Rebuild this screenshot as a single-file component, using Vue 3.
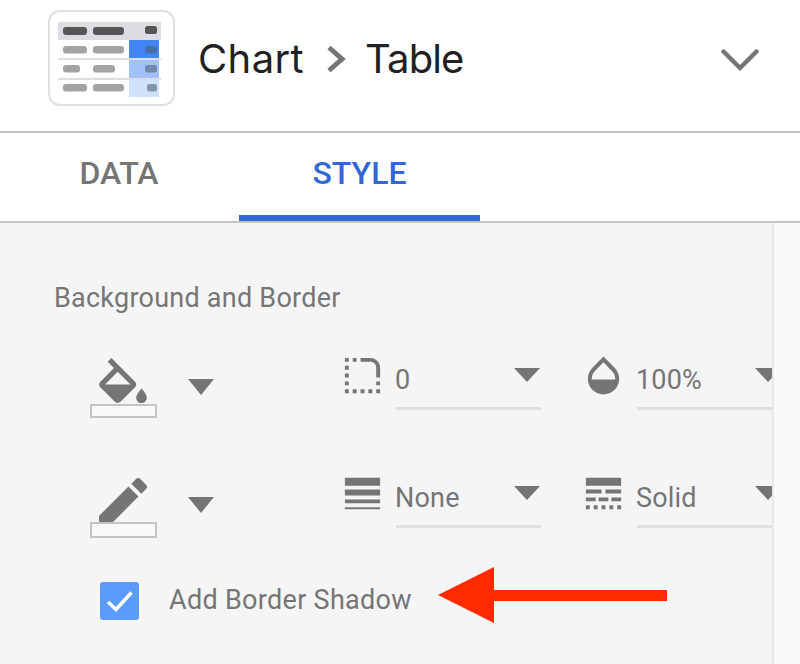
<script setup>
const fill = "M16.56 8.94L7.62 0 6.21 1.41l2.38 2.38-5.15 5.15c-.59.59-.59 1.54 0 2.12l5.5 5.5c.29.29.68.44 1.06.44s.77-.15 1.06-.44l5.5-5.5c.59-.58.59-1.53 0-2.12zM5.21 10L10 5.21 14.79 10H5.21zM19 11.5s-2 2.17-2 3.5c0 1.1.9 2 2 2s2-.9 2-2c0-1.33-2-3.5-2-3.5z";
const pencil = "M3 17.25V21h3.75L17.81 9.94l-3.75-3.75L3 17.25zM20.71 7.04c.39-.39.39-1.02 0-1.41l-2.34-2.34c-.39-.39-1.02-.39-1.41 0l-1.83 1.83 3.75 3.75 1.83-1.83z";
const rows = [
  {
    colorPath: fill, colorBox: "0 0 24 17", colorH: 45, swatchH: 14, pad: 6,
    fields: [
      { icon: "M19 19h2v2h-2v-2zm0-2h2v-2h-2v2zM3 13h2v-2H3v2zm0 4h2v-2H3v2zm0-8h2V7H3v2zm0-4h2V3H3v2zm4 0h2V3H7v2zm8 16h2v-2h-2v2zm-4 0h2v-2h-2v2zm-4 0h2v-2H7v2zm-4 0h2v-2H3v2zM21 8c0-2.76-2.24-5-5-5h-5v2h5c1.65 0 3 1.35 3 3v5h2V8z", value: "0" },
      { icon: "M17.66 8L12 2.35 6.34 8C4.78 9.56 4 11.64 4 13.64s.78 4.11 2.34 5.67 3.61 2.35 5.66 2.35 4.1-.79 5.66-2.35S20 15.64 20 13.64 19.22 9.56 17.66 8zM6 14c.01-2 .62-3.27 1.76-4.4L12 5.27l4.24 4.38C17.38 10.77 17.99 12 18 14H6z", value: "100%" }
    ]
  },
  {
    colorPath: pencil, colorBox: "0 3 24 16.5", colorH: 44, swatchH: 16, pad: 8,
    fields: [
      { icon: "M3 17h18v-2H3v2zm0 3h18v-1H3v1zm0-7h18v-3H3v3zm0-9v4h18V4H3z", value: "None" },
      { icon: "M3 16h5v-2H3v2zm6.5 0h5v-2h-5v2zm6.5 0h5v-2h-5v2zM3 20h2v-2H3v2zm4 0h2v-2H7v2zm4 0h2v-2h-2v2zm4 0h2v-2h-2v2zm4 0h2v-2h-2v2zM3 12h8v-2H3v2zm10 0h8v-2h-8v2zM3 4v4h18V4H3z", value: "Solid" }
    ]
  }
];
</script>

<template>
  <div class="page">
    <header class="head">
      <div class="logo">
        <svg width="127" height="96" viewBox="48 10 127 96">
          <rect x="58" y="22" width="103" height="18" fill="#dcdde0" />
          <rect x="129" y="40" width="30" height="18" fill="#4285f4" />
          <rect x="129" y="60" width="30" height="18" fill="#a0c2f9" />
          <rect x="129" y="79" width="30" height="18" fill="#d0e1fc" />
          <rect x="58" y="58" width="103" height="2" fill="#dcdde0" />
          <rect x="58" y="78" width="103" height="2" fill="#dcdde0" />
          <rect x="63" y="27" width="24" height="8" rx="3" fill="#555" />
          <rect x="93" y="27" width="31" height="8" rx="3" fill="#555" />
          <rect x="145" y="26" width="12" height="8" rx="2.5" fill="#555" />
          <rect x="63" y="46" width="24" height="7.5" rx="3" fill="#a3a3a3" />
          <rect x="93" y="46" width="31" height="7.5" rx="3" fill="#a3a3a3" />
          <rect x="145" y="46" width="12" height="7.5" rx="2.5" fill="#4b6fac" />
          <rect x="63" y="65" width="17" height="7.5" rx="3" fill="#a3a3a3" />
          <rect x="93" y="65" width="22" height="7.5" rx="3" fill="#a3a3a3" />
          <rect x="145" y="65" width="12" height="7.5" rx="2.5" fill="#7488ab" />
          <rect x="63" y="84" width="24" height="7.5" rx="3" fill="#a3a3a3" />
          <rect x="93" y="84" width="31" height="7.5" rx="3" fill="#a3a3a3" />
          <rect x="147" y="84" width="10" height="7.5" rx="2.5" fill="#8494ab" />
        </svg>
      </div>
      <div class="crumbs">
        <span class="crumb first">Chart</span>
        <svg class="sep" width="20" height="28" viewBox="0 0 20 28"><path d="M3 2.5 L16 14 L3 25.5" fill="none" stroke="#757575" stroke-width="5" /></svg>
        <span class="crumb">Table</span>
      </div>
      <svg class="chev" width="38" height="24" viewBox="0 0 38 24"><path d="M2.5 3.5 L19 20 L35.5 3.5" fill="none" stroke="#757575" stroke-width="4.4" stroke-linecap="round" /></svg>
    </header>

    <nav class="tabs">
      <div class="tab">DATA</div>
      <div class="tab active">STYLE</div>
    </nav>

    <main class="wrap">
      <section class="panel">
        <div class="title">Background and Border</div>

        <div v-for="(r, i) in rows" :key="i" class="row">
          <div class="color" :style="{ paddingTop: r.pad + 'px' }">
            <svg width="64" :height="r.colorH" :viewBox="r.colorBox" preserveAspectRatio="xMidYMin meet"><path :d="r.colorPath" fill="#757575" /></svg>
            <div class="swatch" :style="{ height: r.swatchH + 'px', marginTop: i === 0 ? '1px' : '0' }"></div>
          </div>
          <div class="caret big"></div>
          <div v-for="(f, j) in r.fields" :key="j" class="group" :class="{ last: j === 1 }">
            <svg width="47" height="47" viewBox="0 0 24 24"><path :d="f.icon" fill="#757575" /></svg>
            <div class="field">
              <span class="val">{{ f.value }}</span>
              <div class="caret"></div>
            </div>
          </div>
        </div>

        <label class="check">
          <span class="box">
            <svg width="39" height="38" viewBox="0 0 39 38"><path d="M8 20 L16 27.5 L31.5 10.5" fill="none" stroke="#fff" stroke-width="3.6" /></svg>
          </span>
          <span class="lab">Add Border Shadow</span>
        </label>
      </section>
      <div class="side"></div>
      <svg class="arrow" width="229" height="56" viewBox="0 0 229 56"><path d="M0 28 L56 0 V23 H229 V34 H56 V56 Z" fill="#ff2a00" /></svg>
    </main>
  </div>
</template>

<style scoped>
.page {
  width: 800px;
  height: 664px;
  overflow: hidden;
  background: #fff;
  font-family: Roboto, "Liberation Sans", sans-serif;
}
.head {
  height: 131px;
  box-sizing: content-box;
  display: flex;
  align-items: flex-start;
  border-bottom: 2px solid #c4c4c4;
  padding-left: 48px;
}
.logo {
  width: 127px;
  height: 96px;
  margin-top: 10px;
  box-sizing: border-box;
  border: 2px solid #dfe0e3;
  border-radius: 12px;
  overflow: hidden;
  background: #fff;
  flex: none;
}
.logo svg { display: block; margin: -2px; }
.crumbs {
  display: flex;
  align-items: center;
  height: 42px;
  margin: 37px 0 0 23px;
  font-family: Inter, Roboto, sans-serif;
  font-size: 40px;
  color: #202124;
}
.crumb { letter-spacing: -0.9px; }
.crumb.first { letter-spacing: 0.4px; }
.sep { margin: 1px 19px 0 22px; }
.chev { margin: 48px 41px 0 auto; }
.tabs {
  display: flex;
  height: 88px;
  border-bottom: 2px solid #c4c4c4;
}
.tab {
  width: 241px;
  height: 88px;
  box-sizing: border-box;
  text-align: center;
  font-size: 32px;
  font-weight: 500;
  line-height: 80px;
  color: #757575;
}
.tab:first-child { width: 238px; }
.tab.active {
  margin-left: 1px;
  color: #3367d6;
  border-bottom: 6px solid #3367d6;
}
.wrap {
  position: relative;
  display: flex;
  height: 441px;
}
.panel {
  width: 772px;
  flex: none;
  background: #f5f5f5;
  border-right: 2px solid #e8e8e8;
  overflow: hidden;
  padding-top: 1px;
}
.side { flex: 1; background: #fafafa; }
.title {
  margin: 60px 0 0 54px;
  height: 28px;
  line-height: 28px;
  font-size: 27px;
  letter-spacing: 0.24px;
  color: #757575;
}
.row {
  display: flex;
  align-items: flex-start;
  height: 118px;
  padding-left: 90px;
  width: 682px;
}
.row:nth-of-type(2) { margin-top: 40px; }
.color { width: 67px; flex: none; display: flex; flex-direction: column; }
.color svg { display: block; margin-left: 1px; }
.swatch {
  box-sizing: border-box;
  border: 2px solid #c4c4c4;
  background: #f8f8f8;
}
.caret {
  flex: none;
  width: 0;
  height: 0;
  border-left: 13.5px solid transparent;
  border-right: 13.5px solid transparent;
  border-top: 14px solid #757575;
  margin-top: 16px;
}
.caret.big { margin: 27px 125px 0 31px; border-top-width: 16px; }
.group { display: flex; flex: none; align-items: flex-start; gap: 10px; margin-right: 39px; }
.group.last { margin-right: 0; }
.group svg { display: block; flex: none; }
.field {
  display: grid;
  grid-template-columns: 118px 27px;
  width: 145px;
  height: 58px;
  box-sizing: border-box;
  border-bottom: 3px solid #e0e0e0;
  overflow: hidden;
}
.last .field { width: 135px; }
.val {
  font-size: 27px;
  letter-spacing: 0.2px;
  line-height: 56px;
  margin-left: -1px;
  color: #757575;
}
.check {
  display: flex;
  align-items: center;
  gap: 30px;
  margin: -6px 0 0 100px;
}
.box {
  width: 39px;
  height: 38px;
  border-radius: 3px;
  background: #5c9aff;
}
.box svg { display: block; }
.lab {
  font-size: 27px;
  letter-spacing: 0.3px;
  line-height: 34px;
  padding-bottom: 3px;
  color: #757575;
}
.arrow {
  position: absolute;
  left: 438px;
  top: 344px;
}
</style>
